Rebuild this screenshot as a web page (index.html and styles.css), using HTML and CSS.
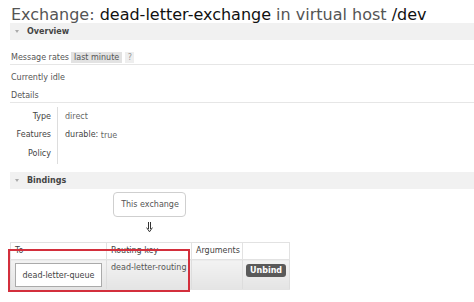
FILE: index.html
```html
<!DOCTYPE html>
<html>
<head>
<meta charset="utf-8">
<link rel="stylesheet" href="styles.css">
</head>
<body>
<div class="page">
  <h1 class="title">Exchange: <span class="strong">dead-letter-exchange</span> in virtual host <span class="strong">/dev</span></h1>
  <div class="section-bar"><span class="tri"></span>Overview</div>
  <div class="rates">
    <span class="rates-label">Message rates</span>
    <span class="badge">last minute</span>
    <span class="badge help">?</span>
  </div>
  <div class="idle">Currently idle</div>
  <div class="subhead">Details</div>
  <div class="details">
    <div class="dlabel">Type</div><div class="dvalue">direct</div>
    <div class="dlabel">Features</div><div class="dvalue"><span class="feat">durable:</span> <span class="featval">true</span></div>
    <div class="dlabel">Policy</div><div class="dvalue"></div>
  </div>
  <div class="section-bar bindings"><span class="tri"></span>Bindings</div>
  <div class="binding-area">
    <div class="source-row"><span class="source-box">This exchange</span></div>
    <div class="arrow">
      <svg width="7" height="11" viewBox="0 0 7 11" aria-label="⇓">
        <path d="M2.5 0 V7 M4.5 0 V7 M0.6 5.6 L3.5 9.8 L6.4 5.6" fill="none" stroke="#333" stroke-width="1"/>
      </svg>
    </div>
    <div class="table-wrap">
      <table class="bind-table">
        <colgroup>
          <col class="w-to"><col class="w-key"><col class="w-args"><col class="w-act">
        </colgroup>
        <thead>
          <tr><th>To</th><th>Routing key</th><th>Arguments</th><th></th></tr>
        </thead>
        <tbody>
          <tr>
            <td class="c-to"><span class="queue-box">dead-letter-queue</span></td>
            <td class="c-key">dead-letter-routing</td>
            <td class="c-args"></td>
            <td class="c-act"><span class="unbind">Unbind</span></td>
          </tr>
        </tbody>
      </table>
      <div class="highlight"></div>
    </div>
  </div>
</div>
</body>
</html>
```

FILE: styles.css
```css
html, body {
  margin: 0;
  padding: 0;
  background: #ffffff;
}
body {
  font-family: "DejaVu Sans", Verdana, sans-serif;
  font-size: 8px;
  color: #555;
  min-height: 302px;
}
.page {
  padding-left: 10px;
  padding-bottom: 12px;
  width: 464px;
}
.title {
  margin: 0;
  padding-top: 6px;
  font-size: 16px;
  line-height: 17px;
  height: 17px;
  font-weight: normal;
  color: #555;
  white-space: nowrap;
  padding-left: 1px;
}
.title .strong {
  color: #111;
}
.section-bar {
  height: 17px;
  line-height: 17px;
  background: #f1f1f1;
  font-weight: bold;
  color: #444;
  display: flex;
  align-items: center;
  padding-left: 5px;
}
.tri {
  width: 0;
  height: 0;
  border-left: 2.5px solid transparent;
  border-right: 2.5px solid transparent;
  border-top: 3px solid #aaa;
  margin-right: 8px;
}
.rates {
  margin-top: 10px;
  padding-top: 1px;
  height: 13px;
  display: flex;
  align-items: center;
  border-bottom: 1px solid #e6e6e6;
  padding-left: 1px;
}
.rates-label {
  margin-right: 2px;
}
.badge {
  background: #e2e2e2;
  color: #555;
  height: 11px;
  line-height: 11px;
  padding: 0 3px;
  margin-right: 3px;
}
.badge.help {
  background: #eeeeee;
  color: #999;
  padding: 0 2.5px;
}
.idle {
  margin-top: 8px;
  line-height: 10px;
  padding-left: 1px;
}
.subhead {
  margin-top: 8px;
  line-height: 10px;
  padding-left: 1px;
  padding-bottom: 1px;
  border-bottom: 1px solid #e6e6e6;
}
.details {
  margin-top: 4px;
  display: grid;
  grid-template-columns: 48px auto;
  grid-template-rows: 18px 18px 21px;
  align-items: center;
}
.dlabel {
  height: 100%;
  display: flex;
  align-items: center;
  justify-content: flex-end;
  padding-right: 6px;
  border-right: 1px solid #ddd;
  color: #444;
  box-sizing: border-box;
}
.dvalue {
  padding-left: 7px;
  color: #666;
}
.feat {
  color: #444;
}
.featval {
  color: #666;
  position: relative;
  top: 1px;
}
.bindings {
  margin-top: 8px;
}
.binding-area {
  width: 279px;
}
.source-row {
  margin-top: 3px;
  display: flex;
  justify-content: center;
}
.source-box {
  width: 73px;
  height: 25px;
  box-sizing: border-box;
  border: 1px solid #cfcfcf;
  border-radius: 4px;
  display: flex;
  align-items: center;
  justify-content: center;
  color: #555;
  padding-left: 1px;
}
.arrow {
  height: 25px;
  box-sizing: border-box;
  padding-top: 5px;
  display: flex;
  justify-content: center;
  align-items: flex-start;
}
.arrow svg {
  display: block;
}
.table-wrap {
  position: relative;
}
.bind-table {
  border-collapse: collapse;
  width: 279px;
  table-layout: fixed;
}
.w-to { width: 96px; }
.w-key { width: 85px; }
.w-args { width: 51px; }
.w-act { width: 47px; }
.bind-table th, .bind-table td {
  padding: 0 4px;
  text-align: left;
  font-weight: normal;
  vertical-align: top;
}
.bind-table th {
  height: 16px;
  line-height: 16px;
  color: #444;
  background: #fff;
  border: 1px solid #e2e2e2;
  box-sizing: border-box;
}
.bind-table td {
  height: 30px;
  background: linear-gradient(#f3f3f3, #e4e4e4);
  border-right: 1px solid #ddd;
  border-left: 1px solid #ddd;
  border-bottom: 1px solid #e4e4e4;
  padding-top: 3px;
  color: #555;
  box-sizing: border-box;
}
.queue-box {
  display: flex;
  align-items: center;
  justify-content: center;
  width: 87px;
  height: 24px;
  box-sizing: border-box;
  background: #fff;
  border: 1px solid #aaa;
  color: #444;
}
.bind-table td.c-key {
  padding-top: 3px;
}
.bind-table td.c-act {
  padding-left: 3px;
}
.unbind {
  display: inline-block;
  background: #5a5a5a;
  color: #fff;
  font-weight: bold;
  height: 13px;
  line-height: 13px;
  padding: 0 4px;
  border-radius: 3px;
  margin-top: 0.5px;
}
.highlight {
  position: absolute;
  left: -2px;
  top: 7px;
  width: 182px;
  height: 43px;
  box-sizing: border-box;
  border: 2px solid #d32f3c;
  pointer-events: none;
  z-index: 2;
}
```
